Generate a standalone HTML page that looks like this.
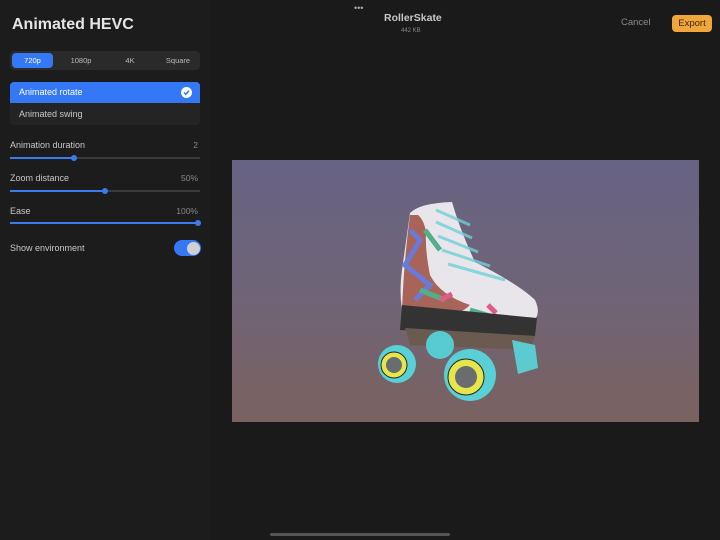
<!DOCTYPE html>
<html><head><meta charset="utf-8"><style>
*{margin:0;padding:0;box-sizing:border-box}
body{width:720px;height:540px;background:#1a1a1a;font-family:"Liberation Sans",sans-serif;color:#ddd;position:relative;overflow:hidden}
.panel{position:absolute;left:0;top:0;width:210px;height:540px;background:#1c1c1d}
.title{position:absolute;left:12px;top:16px;font-size:16px;font-weight:bold;color:#e6e6e6}
.seg{position:absolute;left:10px;top:51px;width:190px;height:19px;background:#2a2a2b;border-radius:4px;font-size:7.5px;color:#bbb}
.seg div{position:absolute;top:0;height:19px;line-height:19px;text-align:center}
.list{position:absolute;left:10px;top:82px;width:190px;height:43px;border-radius:4px;background:#242425;overflow:hidden;font-size:9px}
.lab{position:absolute;font-size:9px;color:#c8c8c8}
.val{position:absolute;font-size:8.5px;color:#888;text-align:right}
.track{position:absolute;left:10px;width:190px;height:1.5px;background:#3a3a3a}
.fill{position:absolute;left:0;top:0;height:1.5px;background:#3b7bf0}
.knob{position:absolute;top:-2.5px;width:6px;height:6px;border-radius:50%;background:#3b7bf0}
</style></head><body>
<div class="panel">
<div class="title">Animated HEVC</div>
<div class="seg">
<div style="left:2px;top:2px;height:15px;line-height:15px;width:41px;background:#3478f6;border-radius:4px;color:#fff">720p</div>
<div style="left:50px;width:42px">1080p</div>
<div style="left:100px;width:40px">4K</div>
<div style="left:148px;width:40px">Square</div>
</div>
<div class="list">
<div style="height:21px;background:#3478f6;color:#fff;padding-left:9px;line-height:21px">Animated rotate
<span style="position:absolute;right:8px;top:5px;width:11px;height:11px;border-radius:50%;background:#fff"><svg width="11" height="11" style="position:absolute;left:0;top:0"><path d="M3 5.6 L4.8 7.3 L8 3.8" stroke="#3478f6" stroke-width="1.5" fill="none"/></svg></span></div>
<div style="height:22px;color:#c8c8c8;padding-left:9px;line-height:22px">Animated swing</div>
</div>
<div class="lab" style="left:10px;top:140px">Animation duration</div><div class="val" style="right:12px;top:140px">2</div>
<div class="track" style="top:157px"><div class="fill" style="width:64px"></div><div class="knob" style="left:61px"></div></div>
<div class="lab" style="left:10px;top:173px">Zoom distance</div><div class="val" style="right:12px;top:173px">50%</div>
<div class="track" style="top:190px"><div class="fill" style="width:95px"></div><div class="knob" style="left:92px"></div></div>
<div class="lab" style="left:10px;top:206px">Ease</div><div class="val" style="right:12px;top:206px">100%</div>
<div class="track" style="top:222px"><div class="fill" style="width:188px"></div><div class="knob" style="left:185px"></div></div>
<div class="lab" style="left:10px;top:243px">Show environment</div>
<div style="position:absolute;left:174px;top:240px;width:27px;height:16px;border-radius:8px;background:#3478f6"><div style="position:absolute;right:1.5px;top:1.5px;width:13px;height:13px;border-radius:50%;background:#d0d0d0"></div></div>
</div>
<div style="position:absolute;left:354px;top:3px;font-size:9px;color:#aaa">•••</div>
<div style="position:absolute;left:384px;top:12px;font-size:10.5px;font-weight:bold;color:#c8c8c8">RollerSkate</div>
<div style="position:absolute;left:401px;top:28px;font-size:6px;color:#888">442 KB</div>
<div style="position:absolute;left:621px;top:17px;font-size:9.5px;color:#8a8a8a">Cancel</div>
<div style="position:absolute;left:672px;top:15px;width:40px;height:17px;border-radius:4px;background:#f0a63a;color:#3a2a10;font-size:9.5px;line-height:17px;text-align:center">Export</div>
<div style="position:absolute;left:232px;top:160px;width:467px;height:262px;background:linear-gradient(#676384,#6f6477 50%,#7a6260)"></div>
<svg style="position:absolute;left:0;top:0" width="720" height="540">
<path d="M410 213 Q420 203 452 202 Q460 230 475 262 Q520 285 535 300 Q542 315 532 322 L405 322 Q398 300 402 270 Z" fill="#e8e6ea"/>
<path d="M410 215 Q404 260 402 310 L440 318 Q460 315 470 305 Q440 295 430 275 Q425 250 426 232 Q424 220 418 215 Z" fill="#a86458"/>
<path d="M410 230 L420 240 L405 265 L430 285 L415 300" stroke="#6a7ad8" stroke-width="5" fill="none"/>
<path d="M425 230 L440 250 M420 290 L445 300 M470 310 L490 316" stroke="#4fb08a" stroke-width="5"/>
<path d="M488 305 l8 8 M440 300 l12 -6" stroke="#e25a8a" stroke-width="5"/>
<path d="M436 210 L470 225 M436 222 L472 238 M438 236 L478 252 M442 250 L490 266 M448 264 L505 280" stroke="#6fd0d8" stroke-width="3" opacity=".8"/>
<path d="M402 305 L537 318 L535 336 L400 330 Z" fill="#333"/>
<path d="M405 328 L535 336 L530 350 L410 345 Z" fill="#6a5a50"/>
<circle cx="440" cy="345" r="14" fill="#56cbd0"/>
<path d="M512 340 L535 345 L538 368 L518 374 Z" fill="#5ccbcf"/>
<circle cx="397" cy="364" r="19" fill="#58d0d6"/>
<circle cx="394" cy="365" r="13" fill="#e6e64a" stroke="#222" stroke-width="1"/>
<circle cx="394" cy="365" r="8" fill="#6a6d70"/>
<circle cx="470" cy="375" r="26" fill="#58d0d6"/>
<circle cx="466" cy="377" r="18" fill="#e6e64a" stroke="#222" stroke-width="1"/>
<circle cx="466" cy="377" r="11" fill="#6a6d70"/>
</svg>
<div style="position:absolute;left:270px;top:533px;width:180px;height:3px;border-radius:2px;background:#555"></div>
</body></html>
